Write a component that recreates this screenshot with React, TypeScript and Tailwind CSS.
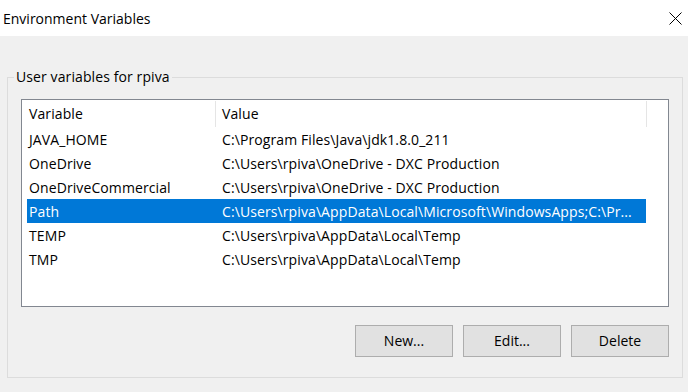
const rows = [
  { name: "JAVA_HOME", value: "C:\\Program Files\\Java\\jdk1.8.0_211" },
  { name: "OneDrive", value: "C:\\Users\\rpiva\\OneDrive - DXC Production" },
  { name: "OneDriveCommercial", value: "C:\\Users\\rpiva\\OneDrive - DXC Production" },
  { name: "Path", value: "C:\\Users\\rpiva\\AppData\\Local\\Microsoft\\WindowsApps;C:\\Pr...", selected: true },
  { name: "TEMP", value: "C:\\Users\\rpiva\\AppData\\Local\\Temp" },
  { name: "TMP", value: "C:\\Users\\rpiva\\AppData\\Local\\Temp" },
];

function CloseIcon() {
  return (
    <svg width="13" height="13" viewBox="0 0 13 13" fill="none">
      <path d="M0.5 0.5 L12.5 12.5 M12.5 0.5 L0.5 12.5" stroke="#000" strokeWidth="1" />
    </svg>
  );
}

function WinButton({ label }: { label: string }) {
  return (
    <button className="w-[98px] h-[32px] bg-[#e1e1e1] border border-[#adadad] text-[14px] text-black leading-none">
      {label}
    </button>
  );
}

export default function App() {
  return (
    <div
      className="w-[688px] h-[392px] flex flex-col bg-[#f0f0f0] overflow-hidden"
      style={{ fontFamily: '"Open Sans", "Noto Sans", sans-serif' }}
    >
      {/* Title bar */}
      <div className="h-[36px] bg-white flex items-center justify-between pl-[3px] pr-[6px]">
        <span className="text-[14px] text-black">Environment Variables</span>
        <CloseIcon />
      </div>

      {/* Group box */}
      <fieldset className="mt-[31px] ml-[7px] mr-[5px] border border-[#dcdcdc] px-[13px] pt-[12px] pb-[20px]">
        <legend className="-ml-[7px] px-[2px] text-[14px] leading-[20px] text-black tracking-[0.1px]">User variables for rpiva</legend>

        {/* List view */}
        <div className="h-[208px] border border-[#828790] bg-white pl-[5px] text-[14px] text-black tracking-[0.1px]">
          <div className="flex h-[27px] w-[620px]">
            <div className="w-[189px] flex items-center pl-[2px]">
              <span className="flex-1">Variable</span>
              <span className="w-px h-[26px] self-end bg-[#e5e5e5]" />
            </div>
            <div className="w-[431px] flex items-center pl-[6px]">
              <span className="flex-1">Value</span>
              <span className="w-px h-[26px] self-end bg-[#e5e5e5]" />
            </div>
          </div>
          {rows.map((r) => (
            <div
              key={r.name}
              className={
                "flex h-[24px] w-[619px] items-center whitespace-nowrap " +
                (r.selected ? "bg-[#0078d7] text-white" : "")
              }
            >
              <div className="w-[189px] pl-[2px]">{r.name}</div>
              <div className="flex-1 pl-[6px] overflow-hidden">{r.value}</div>
            </div>
          ))}
        </div>

        {/* Buttons */}
        <div className="flex justify-end gap-[10px] mt-[18px]">
          <WinButton label="New..." />
          <WinButton label="Edit..." />
          <WinButton label="Delete" />
        </div>
      </fieldset>
    </div>
  );
}
